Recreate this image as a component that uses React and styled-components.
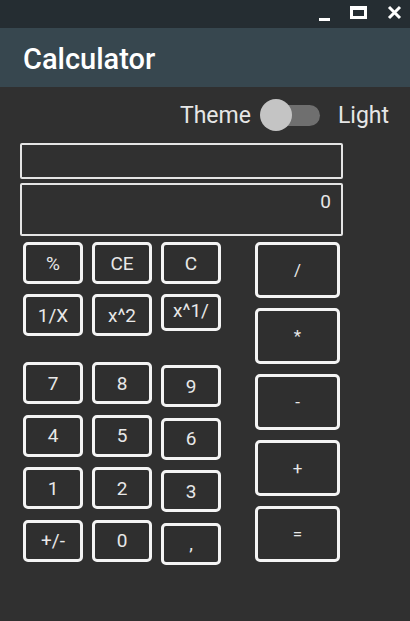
import styled, { createGlobalStyle } from "styled-components";

const GlobalStyle = createGlobalStyle`
  html, body {
    margin: 0;
    padding: 0;
    background: #303030;
    font-family: Roboto, "Liberation Sans", sans-serif;
  }
  * {
    box-sizing: border-box;
  }
`;

const Window = styled.div`
  width: 410px;
  height: 621px;
  background: #303030;
  overflow: hidden;
`;

const TitleBar = styled.div`
  height: 28px;
  background: #252d32;
  display: flex;
  justify-content: flex-end;
  align-items: center;
  padding-right: 8px;
  gap: 20px;
`;

const Minimize = styled.div`
  width: 11px;
  height: 3px;
  background: #ffffff;
  margin-top: 10px;
`;

const Maximize = styled.div`
  width: 17px;
  height: 13px;
  border: 3px solid #ffffff;
  border-top-width: 4px;
  margin-top: -3px;
`;

const Header = styled.div`
  height: 59px;
  background: #37474f;
  display: flex;
  align-items: center;
  padding: 2px 0 0 23px;
`;

const Title = styled.h1`
  margin: 0;
  font-size: 29px;
  font-weight: 500;
  color: #ffffff;
`;

const ThemeRow = styled.div`
  height: 56px;
  display: flex;
  justify-content: flex-end;
  align-items: center;
  padding-right: 21px;
`;

const Label = styled.span`
  font-size: 23px;
  color: #e6e6e6;
`;

const Switch = styled.div`
  position: relative;
  width: 62px;
  height: 32px;
  margin: 0 16px 0 9px;
`;

const Track = styled.div`
  position: absolute;
  left: 12px;
  top: 6px;
  width: 48px;
  height: 21px;
  border-radius: 11px;
  background: #6f6f6f;
`;

const Thumb = styled.div`
  position: absolute;
  left: 0;
  top: 0;
  width: 32px;
  height: 32px;
  border-radius: 50%;
  background: #c4c4c4;
`;

const Display = styled.div`
  margin-left: 20px;
  width: 323px;
  height: ${(p) => p.$h}px;
  margin-top: ${(p) => p.$mt}px;
  border: 2px solid #e4e4e4;
  border-radius: 2px;
  color: #e8e8e8;
  font-size: 19px;
  text-align: right;
  padding: 5px 10px 0 0;
`;

const Keypad = styled.div`
  display: flex;
  margin-top: 6px;
  padding-left: 23px;
`;

const LeftCol = styled.div`
  display: flex;
  flex-direction: column;
  gap: 26px;
`;

const FuncGrid = styled.div`
  display: grid;
  grid-template-columns: repeat(3, 60px);
  grid-auto-rows: 42px;
  column-gap: 9px;
  row-gap: 10px;
`;

const NumGrid = styled.div`
  display: grid;
  grid-template-columns: repeat(3, 60px);
  grid-auto-rows: 45px;
  column-gap: 9px;
  row-gap: 7.5px;
`;

const Key = styled.button`
  width: 60px;
  height: ${(p) => p.$h || 42}px;
  align-self: ${(p) => (p.$low ? "end" : "start")};
  border: 3px solid #f4f4f4;
  border-radius: 5px;
  background: #2f2f2f;
  color: #e8e8e8;
  font-family: Roboto, "Liberation Sans", sans-serif;
  font-size: 19px;
  display: flex;
  justify-content: center;
  align-items: ${(p) => (p.$top ? "flex-start" : "center")};
  padding: ${(p) => (p.$top ? "4px 0 0" : "0")};
  line-height: 1;
`;

const RightCol = styled.div`
  display: flex;
  flex-direction: column;
  gap: 10px;
  margin-left: 34px;
`;

const OpKey = styled.button`
  width: 85px;
  height: 56px;
  border: 3px solid #f4f4f4;
  border-radius: 5px;
  background: #2f2f2f;
  color: #e8e8e8;
  font-family: Roboto, "Liberation Sans", sans-serif;
  font-size: 17px;
  display: flex;
  justify-content: center;
  align-items: center;
  padding: 0;
`;

const CloseIcon = () => (
  <svg width="15" height="15" viewBox="0 0 15 15" style={{ marginTop: -4 }}>
    <path d="M2 2 L13 13 M13 2 L2 13" stroke="#ffffff" strokeWidth="3" />
  </svg>
);

const funcKeys = [
  { t: "%" }, { t: "CE" }, { t: "C" },
  { t: "1/X" }, { t: "x^2" }, { t: "x^1/", h: 37, top: true },
];

const numKeys = ["7", "8", "9", "4", "5", "6", "1", "2", "3", "+/-", "0", ","];

const ops = ["/", "*", "-", "+", "="];

export default function App() {
  return (
    <Window>
      <GlobalStyle />
      <TitleBar>
        <Minimize />
        <Maximize />
        <CloseIcon />
      </TitleBar>
      <Header>
        <Title>Calculator</Title>
      </Header>
      <ThemeRow>
        <Label>Theme</Label>
        <Switch>
          <Track />
          <Thumb />
        </Switch>
        <Label>Light</Label>
      </ThemeRow>
      <Display $h={36} $mt={0} />
      <Display $h={53} $mt={4}>0</Display>
      <Keypad>
        <LeftCol>
          <FuncGrid>
            {funcKeys.map((k) => (
              <Key key={k.t} $h={k.h} $top={k.top}>
                {k.t}
              </Key>
            ))}
          </FuncGrid>
          <NumGrid>
            {numKeys.map((k, i) => (
              <Key key={k} $low={i % 3 === 2}>
                {k}
              </Key>
            ))}
          </NumGrid>
        </LeftCol>
        <RightCol>
          {ops.map((o) => (
            <OpKey key={o}>{o}</OpKey>
          ))}
        </RightCol>
      </Keypad>
    </Window>
  );
}
